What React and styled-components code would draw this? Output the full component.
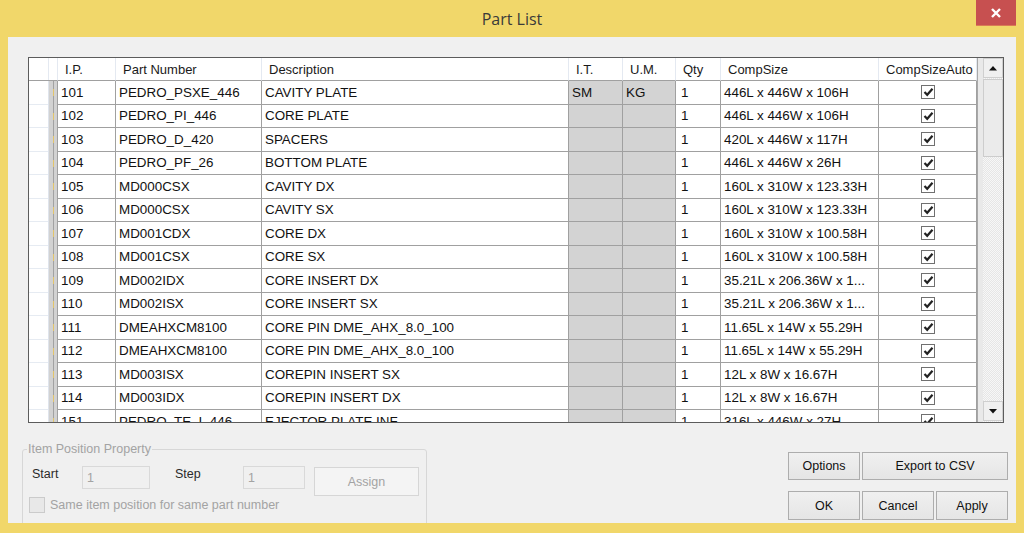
import React from "react";
import styled, { createGlobalStyle } from "styled-components";

const GlobalStyle = createGlobalStyle`
  html, body {
    margin: 0;
    padding: 0;
    background: #f1d76a;
  }
  body {
    font-family: "Liberation Sans", Arial, sans-serif;
  }
`;

// widths of row header + 8 data columns (each includes its right line)
const COLS = "29px 58px 146px 307px 54px 53px 45px 158px 98px";

const headers = [
  "I.P.",
  "Part Number",
  "Description",
  "I.T.",
  "U.M.",
  "Qty",
  "CompSize",
  "CompSizeAuto",
];

const rows = [
  ["101", "PEDRO_PSXE_446", "CAVITY PLATE", "SM", "KG", "1", "446L x 446W x 106H"],
  ["102", "PEDRO_PI_446", "CORE PLATE", "", "", "1", "446L x 446W x 106H"],
  ["103", "PEDRO_D_420", "SPACERS", "", "", "1", "420L x 446W x 117H"],
  ["104", "PEDRO_PF_26", "BOTTOM PLATE", "", "", "1", "446L x 446W x 26H"],
  ["105", "MD000CSX", "CAVITY DX", "", "", "1", "160L x 310W x 123.33H"],
  ["106", "MD000CSX", "CAVITY SX", "", "", "1", "160L x 310W x 123.33H"],
  ["107", "MD001CDX", "CORE DX", "", "", "1", "160L x 310W x 100.58H"],
  ["108", "MD001CSX", "CORE SX", "", "", "1", "160L x 310W x 100.58H"],
  ["109", "MD002IDX", "CORE INSERT DX", "", "", "1", "35.21L x 206.36W x 1..."],
  ["110", "MD002ISX", "CORE INSERT SX", "", "", "1", "35.21L x 206.36W x 1..."],
  ["111", "DMEAHXCM8100", "CORE PIN DME_AHX_8.0_100", "", "", "1", "11.65L x 14W x 55.29H"],
  ["112", "DMEAHXCM8100", "CORE PIN DME_AHX_8.0_100", "", "", "1", "11.65L x 14W x 55.29H"],
  ["113", "MD003ISX", "COREPIN INSERT SX", "", "", "1", "12L x 8W x 16.67H"],
  ["114", "MD003IDX", "COREPIN INSERT DX", "", "", "1", "12L x 8W x 16.67H"],
  ["151", "PEDRO_TE_I_446", "EJECTOR PLATE INF", "", "", "1", "316L x 446W x 27H"],
];

function CheckMark() {
  return (
    <svg width="11" height="10" viewBox="0 0 11 10">
      <path d="M1.5 5 L4.2 7.8 L9.5 1.8" fill="none" stroke="#222" strokeWidth="2.2" />
    </svg>
  );
}

function Arrow({ down }) {
  return (
    <svg width="8" height="5" viewBox="0 0 8 5">
      <polygon points={down ? "0,0 8,0 4,4.5" : "0,4.5 8,4.5 4,0"} fill="#111" />
    </svg>
  );
}

function App() {
  return (
    <Window>
      <GlobalStyle />
      <TitleBar>
        <Title>Part List</Title>
        <CloseButton title="Close">
          <svg width="10" height="10" viewBox="0 0 10 10">
            <path d="M1 1 L9 9 M9 1 L1 9" stroke="#fff" strokeWidth="2.4" />
          </svg>
        </CloseButton>
      </TitleBar>

      <Client>
        <GridBox>
          <Table>
            <Row $header>
              <HeadCorner />
              {headers.map((h) => (
                <HeadCell key={h}>{h}</HeadCell>
              ))}
            </Row>
            {rows.map((r) => (
              <Row key={r[0]}>
                <RowHead />
                <Cell>{r[0]}</Cell>
                <Cell>{r[1]}</Cell>
                <Cell>{r[2]}</Cell>
                <Cell $shaded>{r[3]}</Cell>
                <Cell $shaded>{r[4]}</Cell>
                <Cell $pad={5}>{r[5]}</Cell>
                <Cell>{r[6]}</Cell>
                <Cell $center>
                  <CheckBox>
                    <CheckMark />
                  </CheckBox>
                </Cell>
              </Row>
            ))}
          </Table>
          <ScrollArea>
            <ScrollBar>
              <ScrollButton>
                <Arrow />
              </ScrollButton>
              <Thumb />
              <Track />
              <ScrollButton $bottom>
                <Arrow down />
              </ScrollButton>
            </ScrollBar>
          </ScrollArea>
        </GridBox>

        <BottomRow>
          <GroupBox>
            <Legend>Item Position Property</Legend>
            <FieldRow>
              <FieldLabel $w={50} $ml={5}>
                Start
              </FieldLabel>
              <TextBox $w={68}>1</TextBox>
              <FieldLabel $w={68} $ml={25}>
                Step
              </FieldLabel>
              <TextBox $w={62}>1</TextBox>
              <DisabledButton>Assign</DisabledButton>
            </FieldRow>
            <CheckRow>
              <DisabledCheck />
              <DisabledText>Same item position for same part number</DisabledText>
            </CheckRow>
          </GroupBox>

          <ButtonPanel>
            <ButtonRow>
              <Button $w={72}>Options</Button>
              <Button $w={146}>Export to CSV</Button>
            </ButtonRow>
            <ButtonRow>
              <Button $w={72} $h={29}>OK</Button>
              <Button $w={72} $h={29}>Cancel</Button>
              <Button $w={72} $h={29}>Apply</Button>
            </ButtonRow>
          </ButtonPanel>
        </BottomRow>
      </Client>
    </Window>
  );
}

const Window = styled.div`
  width: 1024px;
  height: 533px;
  background: #f1d76a;
  display: flex;
  flex-direction: column;
  overflow: hidden;
`;

const TitleBar = styled.div`
  height: 37px;
  flex-shrink: 0;
  display: flex;
  align-items: center;
  justify-content: center;
  position: relative;
`;

const Title = styled.div`
  font-family: "Open Sans", "Noto Sans", sans-serif;
  font-size: 16px;
  color: #3a3a3a;
  margin-top: 1px;
`;

const CloseButton = styled.div`
  position: absolute;
  top: 0;
  right: 8px;
  width: 40px;
  height: 25px;
  background: #c75050;
  border-bottom: 1px solid #d97a55;
  display: flex;
  align-items: center;
  justify-content: center;
`;

const Client = styled.div`
  flex: 1;
  margin: 0 8px 10px 8px;
  background: #f0f0f0;
  padding-top: 20px;
  display: flex;
  flex-direction: column;
  overflow: hidden;
`;

const GridBox = styled.div`
  margin-left: 20px;
  width: 976px;
  height: 366px;
  flex-shrink: 0;
  box-sizing: border-box;
  border: 1px solid #5c5c5c;
  background: #fff;
  display: flex;
  overflow: hidden;
`;

const Table = styled.div`
  width: 948px;
  display: flex;
  flex-direction: column;
`;

const Row = styled.div`
  display: grid;
  grid-template-columns: ${COLS};
  height: ${(p) => (p.$header ? "23px" : "23.5px")};
  flex-shrink: 0;
`;

const HeadCorner = styled.div`
  box-sizing: border-box;
  border-bottom: 1px solid #a0a0a0;
  border-right: 1px solid #e4e9f1;
  background: linear-gradient(to right, #fff 0 19px, #e4e9f1 19px 20px, #fff 20px);
`;

const HeadCell = styled.div`
  box-sizing: border-box;
  display: flex;
  align-items: center;
  padding: 1px 0 0 7px;
  border-bottom: 1px solid #a0a0a0;
  border-right: 1px solid #e4e9f1;
  font-size: 13px;
  color: #1a1a1a;
  white-space: nowrap;
  overflow: hidden;
`;

const RowHead = styled.div`
  position: relative;
  box-sizing: border-box;
  border-right: 1px solid #a0a0a0;
  background:
    linear-gradient(#e6ebf2, #e6ebf2) 0 100% / 19px 1px no-repeat,
    linear-gradient(
      to right,
      #fff 0 19px,
      #dfe4ec 19px 20px,
      #d2d2d2 20px 24px,
      #a2a2a2 24px 25px,
      #d2d2d2 25px
    );

  &::after {
    content: "";
    position: absolute;
    left: 24px;
    top: 8px;
    width: 1px;
    height: 7px;
    background: #e2c46a;
  }
`;

const Cell = styled.div`
  box-sizing: border-box;
  display: flex;
  align-items: center;
  justify-content: ${(p) => (p.$center ? "center" : "flex-start")};
  padding-left: ${(p) => (p.$center ? 0 : p.$pad || 3)}px;
  border-bottom: 1px solid #a0a0a0;
  border-right: 1px solid #a0a0a0;
  background: ${(p) => (p.$shaded ? "#d3d3d3" : "#fff")};
  font-size: 13.4px;
  color: #111;
  white-space: nowrap;
  overflow: hidden;
`;

const CheckBox = styled.div`
  width: 14px;
  height: 14px;
  box-sizing: border-box;
  border: 1px solid #707070;
  background: #fff;
  display: flex;
  align-items: center;
  justify-content: center;
  margin-left: 1px;
`;

const ScrollArea = styled.div`
  width: 26px;
  flex-shrink: 0;
  box-sizing: border-box;
  padding-left: 5px;
  background: #e9e9e9;
  border-left: 1px solid #a8a8a8;
  display: flex;
`;

const ScrollBar = styled.div`
  flex: 1;
  display: flex;
  flex-direction: column;
  background: repeating-conic-gradient(#f7f7f7 0 25%, #e6e6e6 0 50%) 0 0 / 2px 2px;
`;

const ScrollButton = styled.div`
  height: 20px;
  flex-shrink: 0;
  box-sizing: border-box;
  border: 1px solid #cfcfcf;
  background: #f0f0f0;
  display: flex;
  align-items: center;
  justify-content: center;
  margin-bottom: ${(p) => (p.$bottom ? "1px" : "0")};
`;

const Thumb = styled.div`
  height: 78px;
  margin-top: 1px;
  flex-shrink: 0;
  box-sizing: border-box;
  border: 1px solid #cdcdcd;
  background: #ebebeb;
`;

const Track = styled.div`
  flex: 1;
`;

const BottomRow = styled.div`
  display: flex;
  justify-content: space-between;
  align-items: flex-start;
  margin-top: 19px;
  padding: 0 8px 0 14px;
`;

const GroupBox = styled.fieldset`
  margin: 0;
  width: 405px;
  height: 90px;
  box-sizing: border-box;
  border: 1px solid #d7d7d7;
  border-radius: 3px;
  padding: 0 0 0 4px;
  flex-shrink: 0;
`;

const Legend = styled.legend`
  padding: 0 1px;
  font-size: 12.5px;
  line-height: 15px;
  color: #a3a3a3;
`;

const FieldRow = styled.div`
  display: flex;
  align-items: flex-start;
  margin-top: 9px;
`;

const FieldLabel = styled.div`
  width: ${(p) => p.$w}px;
  margin-left: ${(p) => p.$ml || 0}px;
  margin-top: 1px;
  font-size: 12.5px;
  line-height: 15px;
  color: #2a2a2a;
`;

const TextBox = styled.div`
  width: ${(p) => p.$w}px;
  height: 23px;
  box-sizing: border-box;
  border: 1px solid #d9d9d9;
  background: #f0f0f0;
  padding-left: 4px;
  display: flex;
  align-items: center;
  font-size: 12.5px;
  color: #a3a3a3;
`;

const DisabledButton = styled.div`
  width: 105px;
  height: 29px;
  margin: 1px 0 0 9px;
  box-sizing: border-box;
  border: 1px solid #d6d6d6;
  background: #f4f4f4;
  display: flex;
  align-items: center;
  justify-content: center;
  font-size: 12.5px;
  color: #a3a3a3;
`;

const CheckRow = styled.div`
  display: flex;
  align-items: center;
  margin: 1px 0 0 2px;
`;

const DisabledCheck = styled.div`
  width: 16px;
  height: 16px;
  box-sizing: border-box;
  border: 1px solid #cbcbcb;
  background: #e8e8e8;
`;

const DisabledText = styled.div`
  margin-left: 5px;
  font-size: 12.5px;
  color: #a3a3a3;
`;

const ButtonPanel = styled.div`
  margin-top: 10px;
  display: flex;
  flex-direction: column;
  gap: 11px;
`;

const ButtonRow = styled.div`
  display: flex;
  gap: 2px;
`;

const Button = styled.div`
  width: ${(p) => p.$w}px;
  height: ${(p) => p.$h || 28}px;
  box-sizing: border-box;
  border: 1px solid #adadad;
  background: linear-gradient(#f0f0f0, #e5e5e5);
  display: flex;
  align-items: center;
  justify-content: center;
  font-size: 12.5px;
  color: #111;
`;

export default App;
